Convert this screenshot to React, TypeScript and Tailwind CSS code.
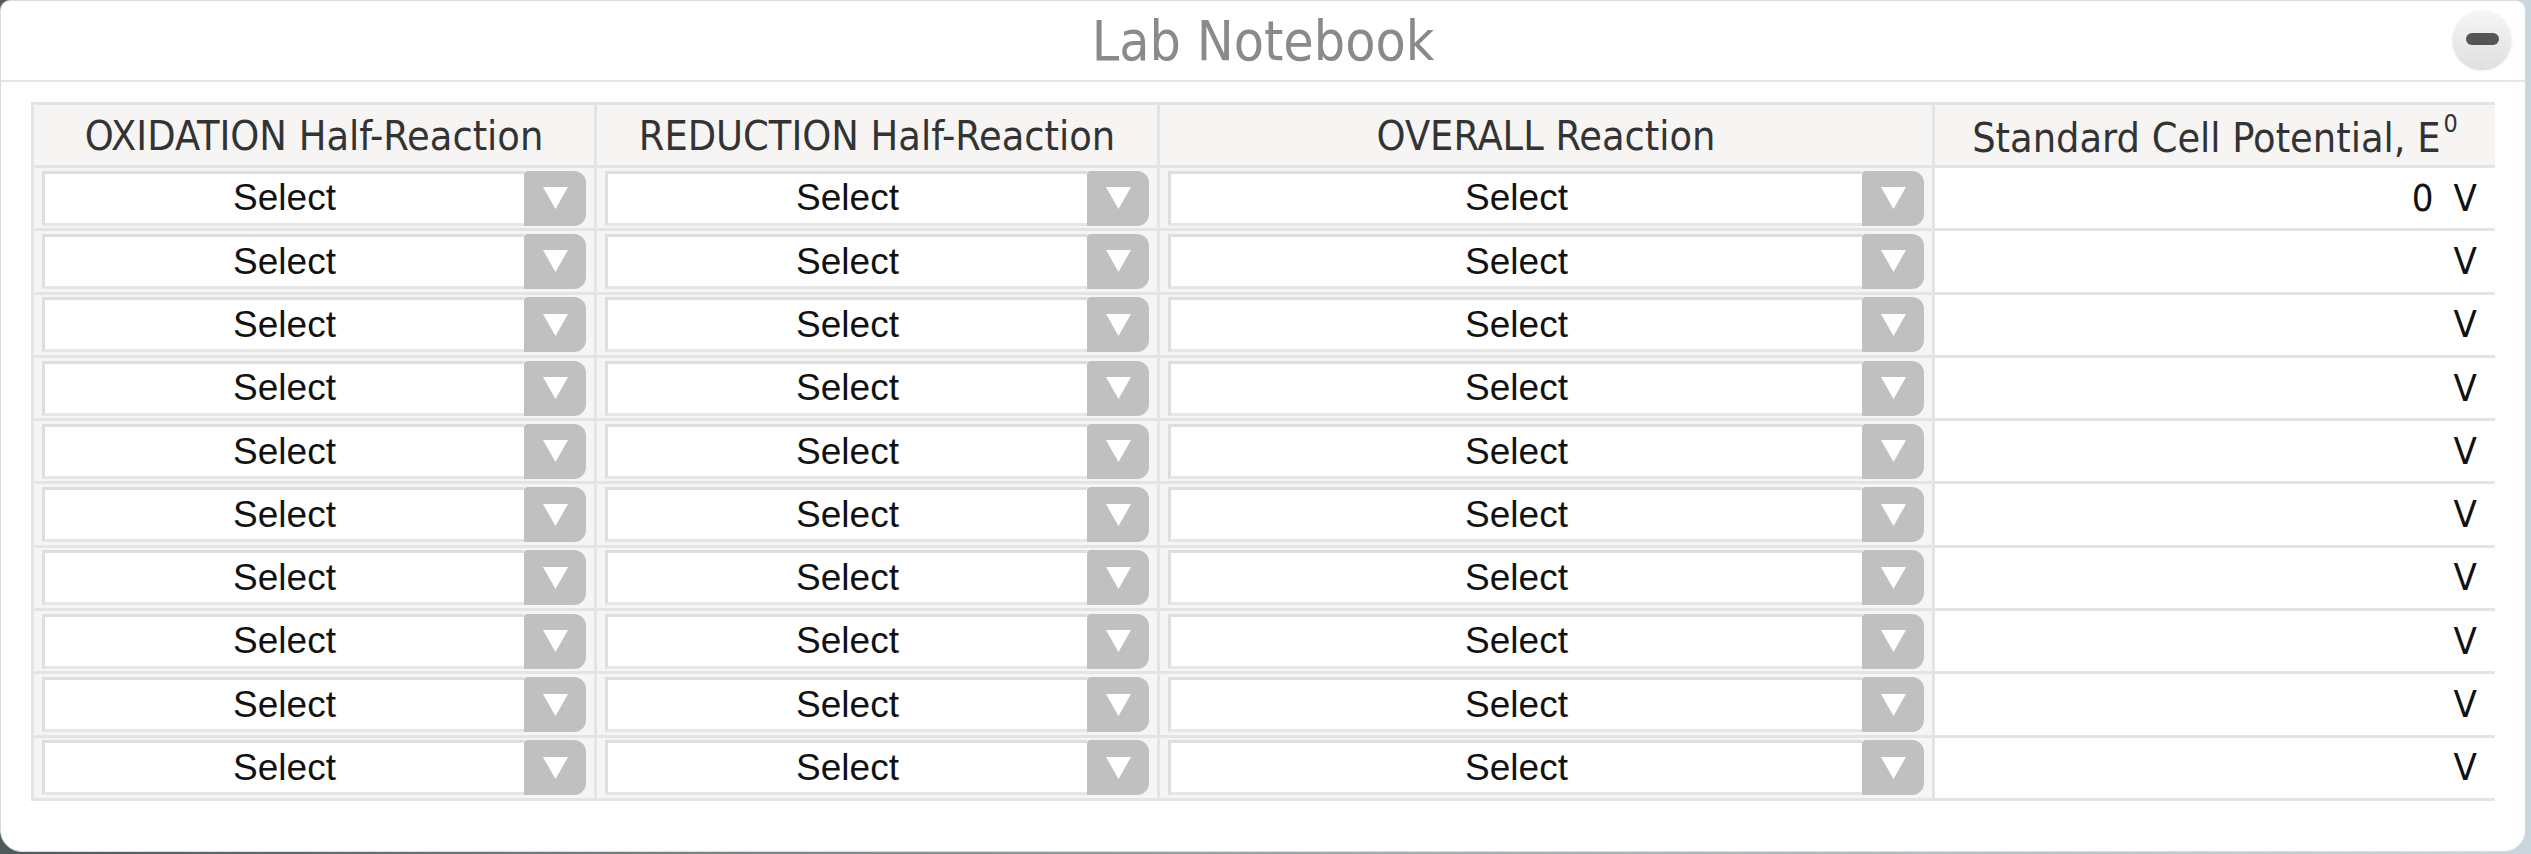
import React from "react";

const condensed = { fontFamily: '"DejaVu Sans Condensed", "Liberation Sans", sans-serif' };
const sans = { fontFamily: '"Liberation Sans", Arial, sans-serif' };

function Triangle() {
  return (
    <svg width="25" height="22" viewBox="0 0 25 22">
      <polygon points="0,0 25,0 12.5,22" fill="#ffffff" />
    </svg>
  );
}

function SelectBox() {
  return (
    <div className="flex h-[55px] w-full">
      <div
        className="flex flex-1 items-center justify-center bg-white border-t-[3px] border-l-[3px] border-b-[3px] border-t-[#dedede] border-l-[#dedede] border-b-[#e6e6e6] text-[37px] text-[#111]"
        style={sans}
      >
        Select
      </div>
      <div className="flex w-[62px] items-center justify-center rounded-tl-[4px] rounded-r-[12px] bg-[#bfc0bf]">
        <Triangle />
      </div>
    </div>
  );
}

function HeaderCell({ children }: { children: React.ReactNode }) {
  return (
    <div className="flex h-[60px] items-center justify-center bg-[#f6f5f3] text-[41px] text-[#333] pt-[4px]" style={condensed}>
      {children}
    </div>
  );
}

export default function App() {
  const rows = Array.from({ length: 10 }, (_, i) => i);
  return (
    <div className="w-[2531px] h-[854px] overflow-hidden bg-gradient-to-r from-[#4d5b5b] via-[#9aa8ad] to-[#c9d6de]">
      <div className="relative w-[2526px] h-[852px] bg-white border border-[#dcdcdc] rounded-b-[22px] rounded-tl-[10px] rounded-tr-[10px]">
        <div className="relative flex h-[81px] items-center justify-center border-b-2 border-[#e6e6e6]">
          <div className="text-[55px] leading-none text-[#8a8a8a] pt-[2px]" style={condensed}>
            Lab Notebook
          </div>
          <div className="absolute right-[14px] top-[9px] flex h-[58px] w-[58px] items-center justify-center rounded-full bg-gradient-to-b from-[#f6f6f6] to-[#e0e0e0] shadow-[0_2px_3px_rgba(0,0,0,0.18)]">
            <div className="h-[12px] w-[33px] rounded-full bg-[#555555]" />
          </div>
        </div>
        <div className="ml-[30px] mt-[20px] w-[2464px]">
          <div className="grid grid-cols-[560px_560px_772px_560px] gap-[3px] bg-[#e4e4e4] p-[3px]">
            <HeaderCell>OXIDATION Half-Reaction</HeaderCell>
            <HeaderCell>REDUCTION Half-Reaction</HeaderCell>
            <HeaderCell>OVERALL Reaction</HeaderCell>
            <div className="flex h-[60px] items-end justify-center bg-[#f6f5f3] text-[41px] leading-none text-[#333] pb-[6px]" style={condensed}>
              <span>
                Standard Cell Potential, E<sup className="text-[25px] relative top-[-20px] ml-[3px]">0</sup>
              </span>
            </div>
            {rows.map((r) => (
              <React.Fragment key={r}>
                <div className="flex h-[60.3px] items-center bg-[#f6f5f3] px-[8px]">
                  <SelectBox />
                </div>
                <div className="flex h-[60.3px] items-center bg-[#f6f5f3] px-[8px]">
                  <SelectBox />
                </div>
                <div className="flex h-[60.3px] items-center bg-[#f6f5f3] px-[8px]">
                  <SelectBox />
                </div>
                <div className="flex h-[60.3px] items-center justify-end bg-white pr-[18px] text-[38px] text-[#111] gap-[20px]" style={condensed}>
                  {r === 0 ? <span>0</span> : null}
                  <span>V</span>
                </div>
              </React.Fragment>
            ))}
          </div>
        </div>
      </div>
    </div>
  );
}
